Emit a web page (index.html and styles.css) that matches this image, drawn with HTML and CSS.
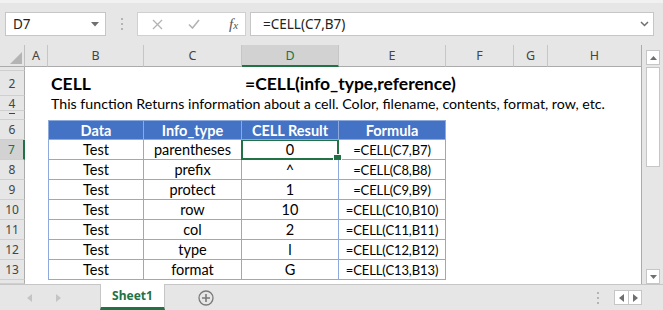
FILE: index.html
```html
<!DOCTYPE html>
<html lang="en">
<head>
    <meta charset="UTF-8">
    <title>CELL Function - Excel</title>
    <link rel="stylesheet" href="styles.css">
</head>
<body>
    <div class="toolbar">
        <div class="namebox">
            <span>D7</span>
            <svg width="8" height="5" viewBox="0 0 8 5"><path d="M0 0 L8 0 L4 4.5 Z" fill="#6f6f6f"/></svg>
        </div>
        <div class="grip"><i></i><i></i><i></i></div>
        <div class="fx-buttons">
            <svg width="11" height="11" viewBox="0 0 11 11"><path d="M1 1 L10 10 M10 1 L1 10" stroke="#b3b3b3" stroke-width="1.3"/></svg>
            <svg width="12" height="10" viewBox="0 0 12 10"><path d="M1 5.5 L4.5 9 L11 1" stroke="#b3b3b3" stroke-width="1.6" fill="none"/></svg>
            <span class="fx">f<small>x</small></span>
        </div>
        <div class="formula">
            <span>=CELL(C7,B7)</span>
            <svg width="9" height="6" viewBox="0 0 9 6"><path d="M1 1 L4.5 4.5 L8 1" stroke="#6f6f6f" stroke-width="1.5" fill="none"/></svg>
        </div>
    </div>

    <div class="sheet">
        <div class="grid">
            <div class="row head">
                <div class="corner"><svg width="12" height="12" viewBox="0 0 12 12"><path d="M12 0 L12 12 L0 12 Z" fill="#b4b4b4"/></svg></div>
                <div class="ch">A</div>
                <div class="ch">B</div>
                <div class="ch">C</div>
                <div class="ch on">D</div>
                <div class="ch">E</div>
                <div class="ch">F</div>
                <div class="ch">G</div>
                <div class="ch last">H</div>
            </div>
            <div class="row h-4"><div class="rh"></div><div class="fill"></div></div>
            <div class="row h-25">
                <div class="rh">2</div>
                <div></div>
                <div class="title span-2">CELL</div>
                <div class="title span-rest">=CELL(info_type,reference)</div>
            </div>
            <div class="row h-15">
                <div class="rh">4</div>
                <div></div>
                <div class="desc span-rest">This function Returns information about a cell. Color, filename, contents, format, row, etc.</div>
            </div>
            <div class="row h-9"><div class="rh clip"><i></i></div><div class="fill"></div></div>
            <div class="row h-20">
                <div class="rh">6</div>
                <div></div>
                <div class="t th first">Data</div>
                <div class="t th">Info_type</div>
                <div class="t th">CELL Result</div>
                <div class="t th">Formula</div>
                <div class="fill-3"></div>
            </div>
            <div class="row h-20">
                <div class="rh on">7</div>
                <div></div>
                <div class="t first">Test</div>
                <div class="t">parentheses</div>
                <div class="t sel">0</div>
                <div class="t f">=CELL(C7,B7)</div>
                <div class="fill-3"></div>
            </div>
            <div class="row h-20">
                <div class="rh">8</div>
                <div></div>
                <div class="t first">Test</div>
                <div class="t">prefix</div>
                <div class="t">^</div>
                <div class="t f">=CELL(C8,B8)</div>
                <div class="fill-3"></div>
            </div>
            <div class="row h-20">
                <div class="rh">9</div>
                <div></div>
                <div class="t first">Test</div>
                <div class="t">protect</div>
                <div class="t">1</div>
                <div class="t f">=CELL(C9,B9)</div>
                <div class="fill-3"></div>
            </div>
            <div class="row h-20">
                <div class="rh">10</div>
                <div></div>
                <div class="t first">Test</div>
                <div class="t">row</div>
                <div class="t">10</div>
                <div class="t f">=CELL(C10,B10)</div>
                <div class="fill-3"></div>
            </div>
            <div class="row h-20">
                <div class="rh">11</div>
                <div></div>
                <div class="t first">Test</div>
                <div class="t">col</div>
                <div class="t">2</div>
                <div class="t f">=CELL(C11,B11)</div>
                <div class="fill-3"></div>
            </div>
            <div class="row h-20">
                <div class="rh">12</div>
                <div></div>
                <div class="t first">Test</div>
                <div class="t">type</div>
                <div class="t">l</div>
                <div class="t f">=CELL(C12,B12)</div>
                <div class="fill-3"></div>
            </div>
            <div class="row h-20">
                <div class="rh">13</div>
                <div></div>
                <div class="t first">Test</div>
                <div class="t">format</div>
                <div class="t">G</div>
                <div class="t f">=CELL(C13,B13)</div>
                <div class="fill-3"></div>
            </div>
            <div class="row h-rest"><div class="rh"></div><div class="fill"></div></div>
        </div>

        <div class="vscroll">
            <div class="sbtn"><svg width="7" height="4" viewBox="0 0 7 4"><path d="M0 4 L7 4 L3.5 0 Z" fill="#6f6f6f"/></svg></div>
            <div class="thumb"></div>
            <div class="track"></div>
            <div class="sbtn"><svg width="7" height="4" viewBox="0 0 7 4"><path d="M0 0 L7 0 L3.5 4 Z" fill="#6f6f6f"/></svg></div>
        </div>
    </div>

    <div class="tabbar">
        <div class="nav">
            <svg width="5" height="8" viewBox="0 0 5 8"><path d="M5 0 L5 8 L0 4 Z" fill="#c4c4c4"/></svg>
            <svg width="5" height="8" viewBox="0 0 5 8"><path d="M0 0 L0 8 L5 4 Z" fill="#c4c4c4"/></svg>
        </div>
        <div class="tab">Sheet1</div>
        <svg class="add" width="16" height="16" viewBox="0 0 16 16"><circle cx="8" cy="8" r="7" stroke="#7a7a7a" stroke-width="1.3" fill="none"/><path d="M8 4 L8 12 M4 8 L12 8" stroke="#7a7a7a" stroke-width="1.6"/></svg>
        <div class="spacer"></div>
        <div class="grip small"><i></i><i></i><i></i></div>
        <div class="hscroll">
            <span><svg width="5" height="8" viewBox="0 0 5 8"><path d="M5 0 L5 8 L0 4 Z" fill="#6f6f6f"/></svg></span>
            <span><svg width="5" height="8" viewBox="0 0 5 8"><path d="M0 0 L0 8 L5 4 Z" fill="#6f6f6f"/></svg></span>
        </div>
    </div>
</body>
</html>
```

FILE: styles.css
```css
* {
    box-sizing: border-box;
}
body {
    margin: 0;
    width: 663px;
    height: 310px;
    overflow: hidden;
    background-color: #e6e6e6;
    font-family: 'Lato', 'Liberation Sans', sans-serif;
    color: #000;
}

/* formula bar */
.toolbar {
    height: 45px;
    display: flex;
    align-items: flex-start;
    padding: 12px 0 0 5px;
    background: linear-gradient(#f1f1f1 0, #f1f1f1 3px, #e6e6e6 3px);
}
.namebox {
    width: 101px;
    height: 24px;
    background-color: #fff;
    border: 1px solid #c6c6c6;
    display: flex;
    align-items: center;
    justify-content: space-between;
    padding: 0 6px 0 7px;
    font-family: 'Noto Sans', sans-serif;
    font-size: 13.5px;
    color: #222;
}
.grip {
    width: 31px;
    display: flex;
    flex-direction: column;
    align-items: center;
    gap: 3px;
    padding-top: 6px;
}
.grip i {
    width: 2px;
    height: 2px;
    background-color: #b4b4b4;
}
.fx-buttons {
    width: 109px;
    height: 24px;
    background-color: #fff;
    border: 1px solid #d0d0d0;
    display: flex;
    align-items: center;
    padding-left: 14px;
    gap: 25px;
}
.fx {
    font-family: 'Liberation Serif', serif;
    font-style: italic;
    font-size: 15px;
    color: #555;
    margin-left: 4px;
}
.fx small {
    font-size: 11px;
}
.formula {
    margin-left: 4px;
    width: 404px;
    height: 24px;
    background-color: #fff;
    border: 1px solid #c6c6c6;
    display: flex;
    align-items: center;
    justify-content: space-between;
    padding: 0 4px 0 12px;
    font-family: 'Noto Sans', sans-serif;
    font-size: 13.5px;
    color: #222;
}

/* sheet grid */
.sheet {
    display: flex;
    height: 239px;
}
.grid {
    width: 642px;
    background-color: #fff;
}
.row {
    display: grid;
    grid-template-columns: 25px 23px 96px 98px 97px 107px 68px 34px 94px;
    overflow: hidden;
}
.head { height: 22px; }
.h-4 { height: 4px; }
.h-25 { height: 25px; }
.h-15 { height: 15px; }
.h-9 { height: 9px; }
.h-20 { height: 20px; }
.h-rest { height: 4px; }

.corner {
    background-color: #e6e6e6;
    border-right: 1px solid #c0c0c0;
    border-bottom: 1px solid #ababab;
    display: flex;
    align-items: flex-end;
    justify-content: flex-end;
    padding: 0 2px 2px 0;
}
.ch {
    background-color: #e6e6e6;
    border-right: 1px solid #c6c6c6;
    border-bottom: 1px solid #ababab;
    display: flex;
    align-items: center;
    justify-content: center;
    font-family: 'Noto Sans', sans-serif;
    font-size: 12.5px;
    color: #444;
}
.ch.on {
    background-color: #d2d2d2;
    border-bottom: 2px solid #217346;
    color: #217346;
}
.ch.last {
    border-right-color: #ababab;
}
.rh {
    background-color: #e6e6e6;
    border-right: 1px solid #ababab;
    border-bottom: 1px solid #cfcfcf;
    display: flex;
    align-items: center;
    justify-content: center;
    font-family: 'Noto Sans', sans-serif;
    font-size: 12px;
    color: #444;
    overflow: hidden;
}
.rh.on {
    background-color: #d2d2d2;
    border-right: 2px solid #217346;
    color: #217346;
}
.rh.clip {
    align-items: flex-start;
    padding-top: 2px;
}
.rh.clip i {
    width: 6px;
    height: 1px;
    background-color: #444;
}
.fill {
    grid-column: 2 / -1;
    border-right: 1px solid #ababab;
}
.fill-3 {
    grid-column: 7 / -1;
    border-right: 1px solid #ababab;
}

.title {
    font-weight: bold;
    font-size: 17.5px;
    display: flex;
    align-items: center;
    padding-left: 3px;
    white-space: nowrap;
}
.desc {
    font-size: 14.2px;
    line-height: 15px;
    display: flex;
    align-items: center;
    padding-left: 3px;
    white-space: nowrap;
}
.span-2 {
    grid-column: span 2;
}
.span-rest {
    grid-column: span 5;
    border-right: 1px solid #ababab;
}
.h-15 .span-rest {
    grid-column: 3 / -1;
}

/* data table */
.t {
    display: flex;
    align-items: center;
    justify-content: center;
    font-size: 14.5px;
    white-space: nowrap;
    border-right: 1px solid #8ea9db;
    border-bottom: 1px solid #8ea9db;
}
.t.f {
    font-size: 13px;
    letter-spacing: -0.1px;
}
.t.first {
    border-left: 1px solid #8ea9db;
}
.th {
    background-color: #4472c4;
    color: #fff;
    font-weight: bold;
    border-top: 1px solid #8ea9db;
}
.sel {
    position: relative;
    z-index: 1;
}
.sel::after {
    content: "";
    position: absolute;
    left: -1px;
    top: -1px;
    right: -1px;
    bottom: -1px;
    border: 2px solid #217346;
}
.sel::before {
    content: "";
    position: absolute;
    right: -4px;
    bottom: -4px;
    width: 7px;
    height: 7px;
    background-color: #217346;
    border: 1px solid #fff;
    z-index: 2;
}

/* vertical scrollbar */
.vscroll {
    width: 21px;
    display: flex;
    flex-direction: column;
    padding: 5px 3px 0 4px;
    gap: 2px;
}
.sbtn {
    height: 15px;
    background-color: #fff;
    border: 1px solid #c6c6c6;
    display: flex;
    align-items: center;
    justify-content: center;
}
.thumb {
    height: 100px;
    background-color: #fff;
    border: 1px solid #c6c6c6;
}
.track {
    flex: 1;
}

/* sheet tabs */
.tabbar {
    height: 26px;
    border-top: 1px solid #c6c6c6;
    display: flex;
    align-items: center;
    padding-right: 21px;
}
.nav {
    width: 100px;
    display: flex;
    gap: 24px;
    padding-left: 27px;
}
.tab {
    width: 65px;
    height: 26px;
    margin-top: -1px;
    background-color: #fff;
    border-left: 1px solid #c6c6c6;
    border-right: 1px solid #c6c6c6;
    border-bottom: 3px solid #217346;
    display: flex;
    align-items: center;
    justify-content: center;
    font-family: 'Noto Sans', sans-serif;
    font-weight: bold;
    font-size: 12px;
    color: #217346;
}
.add {
    margin-left: 33px;
}
.spacer {
    flex: 1;
}
.grip.small {
    width: 4px;
    padding-top: 0;
    margin-right: 14px;
}
.hscroll {
    display: flex;
    height: 15px;
    border: 1px solid #c6c6c6;
    background-color: #fff;
}
.hscroll span {
    width: 13px;
    display: flex;
    align-items: center;
    justify-content: center;
}
.hscroll span + span {
    border-left: 1px solid #c6c6c6;
}
```
